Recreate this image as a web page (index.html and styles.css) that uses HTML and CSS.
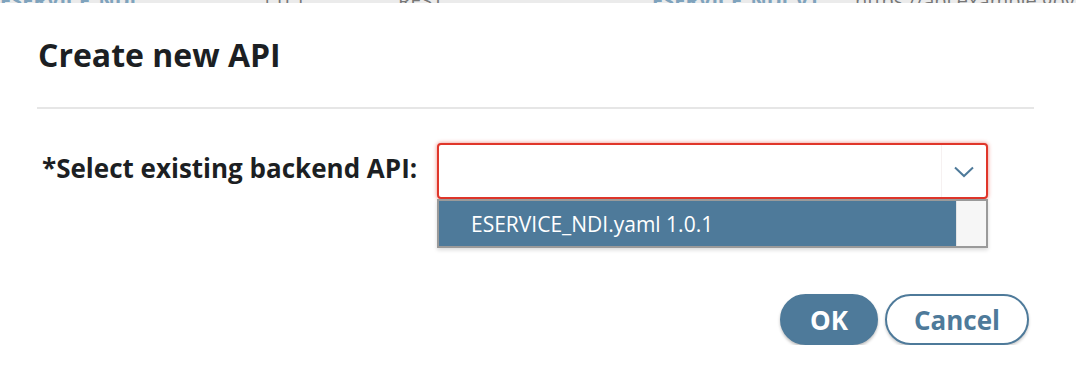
FILE: index.html
```html
<!DOCTYPE html>
<html>
<head>
    <title>Create new API</title>
    <link rel="stylesheet" href="styles.css">
</head>
<body>
    <div class="page-behind">
        <span class="link col1">ESERVICE_NDI</span>
        <span class="cell col2">1.0.1</span>
        <span class="cell col3">REST</span>
        <span class="link col4">ESERVICE_NDI_v1</span>
        <span class="cell col5">https://api.example.gov/eservice/ndi</span>
    </div>
    <div class="dialog">
        <div class="dialog-header">
            <h2>Create new API</h2>
        </div>
        <div class="form-row">
            <label class="form-label">*Select existing backend API:</label>
            <div class="combo">
                <div class="combo-box invalid">
                    <span class="combo-value"></span>
                    <span class="combo-arrow">
                        <svg width="20" height="12" viewBox="0 0 20 12"><path d="M1 1.5 L10 10 L19 1.5" fill="none" stroke="#4e7a9a" stroke-width="2"/></svg>
                    </span>
                </div>
                <div class="combo-list">
                    <div class="combo-option selected">ESERVICE_NDI.yaml 1.0.1</div>
                    <div class="combo-scroll"></div>
                </div>
            </div>
        </div>
        <div class="dialog-buttons">
            <button class="btn btn-primary">OK</button>
            <button class="btn btn-secondary">Cancel</button>
        </div>
    </div>
</body>
</html>
```

FILE: styles.css
```css
body {
    font-family: "Open Sans", Arial, sans-serif;
    background-color: #fff;
    margin: 0;
    padding: 0;
    color: #1c1f23;
}

/* the list page showing behind the dialog */
.page-behind {
    height: 3px;
    background-color: #ebebeb;
    overflow: hidden;
    display: flex;
    font-size: 20px;
    line-height: 10px;
    white-space: nowrap;
}

.page-behind span {
    display: block;
    margin-top: -4px;
    overflow: hidden;
}

.page-behind .link {
    color: #7fa3bd;
    font-weight: bold;
}

.page-behind .cell {
    color: #777;
}

.page-behind .col1 { width: 261px; }
.page-behind .col2 { width: 137px; }
.page-behind .col3 { width: 254px; }
.page-behind .col4 { width: 203px; }
.page-behind .col5 { flex: 1; }

.dialog {
    padding: 0 42px 0 37px;
}

.dialog-header {
    border-bottom: 2px solid #e6e6e6;
    height: 104px;
}

.dialog-header h2 {
    margin: 0;
    padding-top: 32px;
    font-size: 32px;
    line-height: 40px;
    font-weight: bold;
    padding-left: 1px;
}

.form-row {
    display: flex;
    align-items: center;
    margin-top: 34px;
}

.form-label {
    font-size: 26px;
    font-weight: bold;
    width: 395px;
    padding-left: 5px;
    margin-bottom: 6px;
}

.combo {
    position: relative;
    width: 551px;
}

.combo-box {
    display: flex;
    align-items: center;
    height: 52px;
    border: 2px solid #ccc;
    border-radius: 4px;
    background-color: #fff;
}

.combo-box.invalid {
    border-color: #e0362a;
    box-shadow: 0 0 4px rgba(224, 54, 42, 0.6);
}

.combo-value {
    flex: 1;
    height: 100%;
    border-right: 1px solid #f6f1f1;
}

.combo-arrow {
    width: 44px;
    display: flex;
    justify-content: center;
    padding-top: 2px;
}

.combo-list {
    position: absolute;
    top: 56px;
    left: 0;
    right: 0;
    display: flex;
    height: 45px;
    border: 2px solid #9a9a9a;
    box-shadow: 0 2px 4px rgba(0, 0, 0, 0.15);
    background-color: #fff;
}

.combo-option {
    flex: 1;
    font-size: 21px;
    line-height: 45px;
    padding-left: 32px;
    padding-top: 1px;
}

.combo-option.selected {
    background-color: #4e7a9a;
    color: #fff;
}

.combo-scroll {
    width: 29px;
    background-color: #f6f6f6;
    border-left: 1px solid #e4e4e4;
}

.dialog-buttons {
    display: flex;
    justify-content: flex-end;
    gap: 7px;
    margin-top: 95px;
    margin-right: 5px;
}

.btn {
    font-family: "Open Sans", Arial, sans-serif;
    font-size: 26px;
    font-weight: bold;
    height: 51px;
    border-radius: 26px;
    cursor: pointer;
}

.btn-primary {
    width: 98px;
    background-color: #4e7a9a;
    border: 2px solid #4e7a9a;
    color: #fff;
    box-shadow: 0 2px 3px rgba(0, 0, 0, 0.25);
}

.btn-secondary {
    width: 144px;
    background-color: #fff;
    border: 2px solid #4e7a9a;
    color: #4e7a9a;
    box-shadow: 0 2px 3px rgba(0, 0, 0, 0.2);
}
```
